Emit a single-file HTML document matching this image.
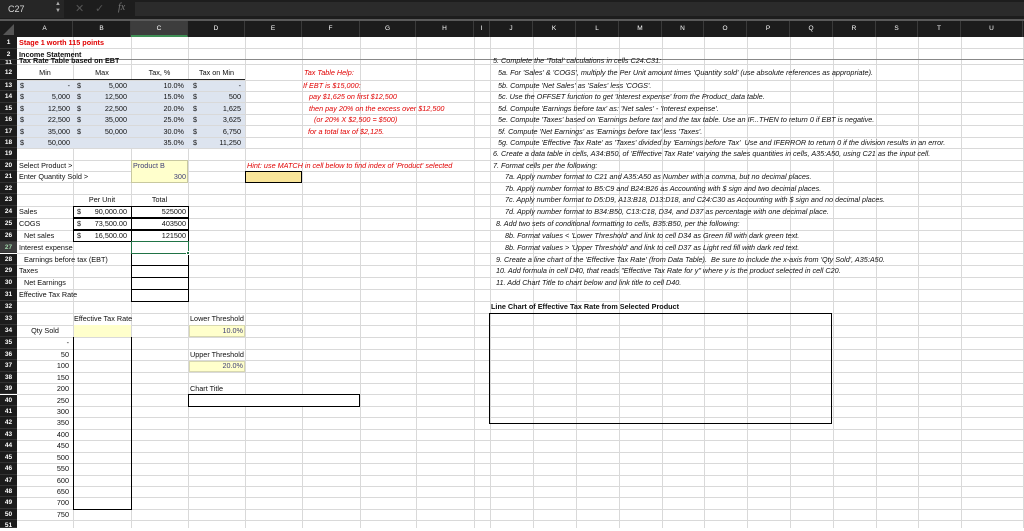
<!DOCTYPE html>
<html><head><meta charset="utf-8"><style>
*{margin:0;padding:0;box-sizing:border-box}
body{width:1024px;height:528px;overflow:hidden;background:#fff;position:relative;font-family:"Liberation Sans",sans-serif}
.a{position:absolute}
.t{position:absolute;font-size:7.25px;white-space:nowrap;color:#111;overflow:visible}
.r{text-align:right}.c{text-align:center}
.red{color:#e00000;font-style:italic}
.it{font-style:italic}
.h{position:absolute;background:#d9d9d9;height:1px;left:17px;width:1007px}
.v{position:absolute;background:#d9d9d9;width:1px;top:37px;height:491px}
.rh{position:absolute;left:0;width:17px;background:#1c1c1c;color:#fff;font-weight:bold;font-size:6.5px;text-align:center;border-bottom:1px solid #333}
.ch{position:absolute;top:21px;height:16px;line-height:16px;color:#fff;font-size:6.5px;text-align:center;border-right:1px solid #3a3a3a}
.bx{position:absolute;border:1.5px solid #000}
</style></head><body>
<div class="a" style="left:0;top:0;width:1024px;height:19px;background:#1d1d1d"></div>
<div class="a" style="left:0;top:0;width:64px;height:18px;background:#262626"></div>
<div class="t" style="left:8px;top:4px;color:#d8d8d8;font-size:9px">C27</div>
<div class="t" style="left:55px;top:1px;color:#aaa;font-size:6px;line-height:7px">▲<br>▼</div>
<div class="t" style="left:75px;top:2px;color:#555;font-size:11px">✕</div>
<div class="t" style="left:95px;top:2px;color:#555;font-size:11px">✓</div>
<div class="t" style="left:118px;top:2px;color:#777;font-size:10px;font-family:'Liberation Serif',serif;font-style:italic">fx</div>
<div class="a" style="left:135px;top:2px;width:889px;height:14px;background:#2b2b2b"></div>
<div class="a" style="left:0;top:19px;width:1024px;height:2px;background:#5a5a5a"></div>
<div class="a" style="left:0;top:21px;width:1024px;height:16px;background:#1c1c1c"></div>
<div class="a" style="left:3px;top:24px;width:0;height:0;border-left:11px solid transparent;border-bottom:11px solid #555"></div>
<div class="ch" style="left:17px;width:56px">A</div>
<div class="ch" style="left:73px;width:58px">B</div>
<div class="ch" style="left:131px;width:57px;background:#3d3d3d;border-bottom:2px solid #3f8f55">C</div>
<div class="ch" style="left:188px;width:57px">D</div>
<div class="ch" style="left:245px;width:57px">E</div>
<div class="ch" style="left:302px;width:58px">F</div>
<div class="ch" style="left:360px;width:56px">G</div>
<div class="ch" style="left:416px;width:58px">H</div>
<div class="ch" style="left:474px;width:16px">I</div>
<div class="ch" style="left:490px;width:43px">J</div>
<div class="ch" style="left:533px;width:43px">K</div>
<div class="ch" style="left:576px;width:43px">L</div>
<div class="ch" style="left:619px;width:43px">M</div>
<div class="ch" style="left:662px;width:42px">N</div>
<div class="ch" style="left:704px;width:43px">O</div>
<div class="ch" style="left:747px;width:43px">P</div>
<div class="ch" style="left:790px;width:43px">Q</div>
<div class="ch" style="left:833px;width:43px">R</div>
<div class="ch" style="left:876px;width:42px">S</div>
<div class="ch" style="left:918px;width:43px">T</div>
<div class="ch" style="left:961px;width:62px">U</div>

<div class="v" style="left:73px"></div><div class="v" style="left:131px"></div><div class="v" style="left:188px"></div>
<div class="v" style="left:245px"></div><div class="v" style="left:302px"></div><div class="v" style="left:360px"></div>
<div class="v" style="left:416px"></div><div class="v" style="left:474px"></div><div class="v" style="left:490px"></div>
<div class="v" style="left:533px"></div><div class="v" style="left:576px"></div><div class="v" style="left:619px"></div>
<div class="v" style="left:662px"></div><div class="v" style="left:704px"></div><div class="v" style="left:747px"></div>
<div class="v" style="left:790px"></div><div class="v" style="left:833px"></div><div class="v" style="left:876px"></div>
<div class="v" style="left:918px"></div><div class="v" style="left:961px"></div><div class="v" style="left:1023px"></div>

<div class="a" style="left:17px;top:80px;width:228px;height:68px;background:#dde4ef"></div>

<div class="h" style="top:48px"></div><div class="h" style="top:59px;background:#888"></div><div class="h" style="top:64px"></div>
<div class="h" style="top:80px"></div><div class="h" style="top:91px"></div><div class="h" style="top:102px"></div>
<div class="h" style="top:114px"></div><div class="h" style="top:125px"></div><div class="h" style="top:137px"></div>
<div class="h" style="top:148px"></div><div class="h" style="top:160px"></div><div class="h" style="top:171px"></div>
<div class="h" style="top:182px"></div><div class="h" style="top:194px"></div><div class="h" style="top:206px"></div>
<div class="h" style="top:218px"></div><div class="h" style="top:230px"></div><div class="h" style="top:241px"></div>
<div class="h" style="top:253px"></div><div class="h" style="top:265px"></div><div class="h" style="top:277px"></div>
<div class="h" style="top:289px"></div><div class="h" style="top:301px"></div><div class="h" style="top:313px"></div>
<div class="h" style="top:325px"></div><div class="h" style="top:337px"></div><div class="h" style="top:349px"></div>
<div class="h" style="top:360px"></div><div class="h" style="top:372px"></div><div class="h" style="top:383px"></div>
<div class="h" style="top:394px"></div><div class="h" style="top:406px"></div><div class="h" style="top:417px"></div>
<div class="h" style="top:429px"></div><div class="h" style="top:440px"></div><div class="h" style="top:452px"></div>
<div class="h" style="top:463px"></div><div class="h" style="top:475px"></div><div class="h" style="top:486px"></div>
<div class="h" style="top:497px"></div><div class="h" style="top:509px"></div><div class="h" style="top:520px"></div>
<div class="a" style="left:17px;top:79px;width:228px;height:1px;background:#222"></div>

<div class="rh" style="top:37px;height:11.5px;line-height:11px">1</div>
<div class="rh" style="top:48.5px;height:11px;line-height:11px">2</div>
<div class="rh" style="top:59.5px;height:5px;line-height:5px;overflow:hidden">11</div>
<div class="rh" style="top:64.5px;height:15.5px;line-height:15px">12</div>
<div class="rh" style="top:80px;height:11.4px;line-height:11px">13</div>
<div class="rh" style="top:91.4px;height:11.4px;line-height:11px">14</div>
<div class="rh" style="top:102.8px;height:11.4px;line-height:11px">15</div>
<div class="rh" style="top:114.2px;height:11.4px;line-height:11px">16</div>
<div class="rh" style="top:125.6px;height:11.4px;line-height:11px">17</div>
<div class="rh" style="top:137px;height:11.4px;line-height:11px">18</div>
<div class="rh" style="top:148.4px;height:11.4px;line-height:11px">19</div>
<div class="rh" style="top:159.8px;height:11.4px;line-height:11px">20</div>
<div class="rh" style="top:171.2px;height:11.4px;line-height:11px">21</div>
<div class="rh" style="top:182.6px;height:11.4px;line-height:11px">22</div>
<div class="rh" style="top:194px;height:11.9px;line-height:12px">23</div>
<div class="rh" style="top:205.9px;height:11.9px;line-height:12px">24</div>
<div class="rh" style="top:217.8px;height:11.9px;line-height:12px">25</div>
<div class="rh" style="top:229.7px;height:11.9px;line-height:12px">26</div>
<div class="rh" style="top:241.6px;height:11.9px;line-height:12px;background:#3d3d3d;color:#9fd6a9">27</div>
<div class="rh" style="top:253.5px;height:11.9px;line-height:12px">28</div>
<div class="rh" style="top:265.4px;height:11.9px;line-height:12px">29</div>
<div class="rh" style="top:277.3px;height:11.9px;line-height:12px">30</div>
<div class="rh" style="top:289.2px;height:11.9px;line-height:12px">31</div>
<div class="rh" style="top:301.1px;height:11.9px;line-height:12px">32</div>
<div class="rh" style="top:313px;height:11.9px;line-height:12px">33</div>
<div class="rh" style="top:324.9px;height:11.9px;line-height:12px">34</div>
<div class="rh" style="top:336.8px;height:11.9px;line-height:12px">35</div>
<div class="rh" style="top:348.7px;height:11.44px;line-height:11px">36</div>
<div class="rh" style="top:360.1px;height:11.44px;line-height:11px">37</div>
<div class="rh" style="top:371.6px;height:11.44px;line-height:11px">38</div>
<div class="rh" style="top:383px;height:11.44px;line-height:11px">39</div>
<div class="rh" style="top:394.5px;height:11.44px;line-height:11px">40</div>
<div class="rh" style="top:405.9px;height:11.44px;line-height:11px">41</div>
<div class="rh" style="top:417.3px;height:11.44px;line-height:11px">42</div>
<div class="rh" style="top:428.8px;height:11.44px;line-height:11px">43</div>
<div class="rh" style="top:440.2px;height:11.44px;line-height:11px">44</div>
<div class="rh" style="top:451.7px;height:11.44px;line-height:11px">45</div>
<div class="rh" style="top:463.1px;height:11.44px;line-height:11px">46</div>
<div class="rh" style="top:474.5px;height:11.44px;line-height:11px">47</div>
<div class="rh" style="top:486px;height:11.44px;line-height:11px">48</div>
<div class="rh" style="top:497.4px;height:11.44px;line-height:11px">49</div>
<div class="rh" style="top:508.9px;height:11.44px;line-height:11px">50</div>
<div class="rh" style="top:520.3px;height:8px;line-height:11px">51</div>

<div class="t" style="left:19px;top:37px;line-height:11px;color:#e00000;font-weight:bold">Stage 1 worth 115 points</div>
<div class="t" style="left:19px;top:48.5px;line-height:11px;font-weight:bold">Income Statement</div>
<div class="t" style="left:19px;top:57px;line-height:7px;height:7px;overflow:hidden;font-weight:bold;text-decoration:underline">Tax Rate Table based on EBT</div>
<div class="t c" style="left:17px;top:66px;width:56px;line-height:14px">Min</div>
<div class="t c" style="left:73px;top:66px;width:58px;line-height:14px">Max</div>
<div class="t c" style="left:131px;top:66px;width:57px;line-height:14px">Tax, %</div>
<div class="t c" style="left:188px;top:66px;width:57px;line-height:14px">Tax on Min</div>
<div class="t red" style="left:304px;top:66px;line-height:14px">Tax Table Help:</div>
<div class="t" style="left:20px;top:80px;line-height:11px">$</div><div class="t r" style="left:20px;top:80px;width:50px;line-height:11px">-</div>
<div class="t" style="left:77px;top:80px;line-height:11px">$</div><div class="t r" style="left:77px;top:80px;width:50px;line-height:11px">5,000</div>
<div class="t r" style="left:131px;top:80px;width:53px;line-height:11px">10.0%</div>
<div class="t" style="left:193px;top:80px;line-height:11px">$</div><div class="t r" style="left:193px;top:80px;width:48px;line-height:11px">-</div>
<div class="t red" style="left:303px;top:80px;line-height:11px">If EBT is $15,000:</div>

<div class="t" style="left:20px;top:91.4px;line-height:11px">$</div><div class="t r" style="left:20px;top:91.4px;width:50px;line-height:11px">5,000</div>
<div class="t" style="left:77px;top:91.4px;line-height:11px">$</div><div class="t r" style="left:77px;top:91.4px;width:50px;line-height:11px">12,500</div>
<div class="t r" style="left:131px;top:91.4px;width:53px;line-height:11px">15.0%</div>
<div class="t" style="left:193px;top:91.4px;line-height:11px">$</div><div class="t r" style="left:193px;top:91.4px;width:48px;line-height:11px">500</div>
<div class="t red" style="left:309px;top:91.4px;line-height:11px">pay $1,625 on first $12,500</div>

<div class="t" style="left:20px;top:102.8px;line-height:11px">$</div><div class="t r" style="left:20px;top:102.8px;width:50px;line-height:11px">12,500</div>
<div class="t" style="left:77px;top:102.8px;line-height:11px">$</div><div class="t r" style="left:77px;top:102.8px;width:50px;line-height:11px">22,500</div>
<div class="t r" style="left:131px;top:102.8px;width:53px;line-height:11px">20.0%</div>
<div class="t" style="left:193px;top:102.8px;line-height:11px">$</div><div class="t r" style="left:193px;top:102.8px;width:48px;line-height:11px">1,625</div>
<div class="t red" style="left:309px;top:102.8px;line-height:11px">then pay 20% on the excess over $12,500</div>

<div class="t" style="left:20px;top:114.2px;line-height:11px">$</div><div class="t r" style="left:20px;top:114.2px;width:50px;line-height:11px">22,500</div>
<div class="t" style="left:77px;top:114.2px;line-height:11px">$</div><div class="t r" style="left:77px;top:114.2px;width:50px;line-height:11px">35,000</div>
<div class="t r" style="left:131px;top:114.2px;width:53px;line-height:11px">25.0%</div>
<div class="t" style="left:193px;top:114.2px;line-height:11px">$</div><div class="t r" style="left:193px;top:114.2px;width:48px;line-height:11px">3,625</div>
<div class="t red" style="left:314px;top:114.2px;line-height:11px">(or 20% X $2,500 = $500)</div>

<div class="t" style="left:20px;top:125.6px;line-height:11px">$</div><div class="t r" style="left:20px;top:125.6px;width:50px;line-height:11px">35,000</div>
<div class="t" style="left:77px;top:125.6px;line-height:11px">$</div><div class="t r" style="left:77px;top:125.6px;width:50px;line-height:11px">50,000</div>
<div class="t r" style="left:131px;top:125.6px;width:53px;line-height:11px">30.0%</div>
<div class="t" style="left:193px;top:125.6px;line-height:11px">$</div><div class="t r" style="left:193px;top:125.6px;width:48px;line-height:11px">6,750</div>
<div class="t red" style="left:308px;top:125.6px;line-height:11px">for a total tax of $2,125.</div>

<div class="t" style="left:20px;top:137px;line-height:11px">$</div><div class="t r" style="left:20px;top:137px;width:50px;line-height:11px">50,000</div>
<div class="t r" style="left:131px;top:137px;width:53px;line-height:11px">35.0%</div>
<div class="t" style="left:193px;top:137px;line-height:11px">$</div><div class="t r" style="left:193px;top:137px;width:48px;line-height:11px">11,250</div>

<div class="a" style="left:131px;top:160px;width:57px;height:23px;background:#ffffcc;border:1px solid #c8c8a0"></div>
<div class="t" style="left:19px;top:159.8px;line-height:11px">Select Product &gt;</div>
<div class="t" style="left:133px;top:159.8px;line-height:11px;color:#3f3f76">Product B</div>
<div class="t red" style="left:247px;top:159.8px;line-height:11px">Hint: use MATCH in cell below to find index of 'Product' selected</div>
<div class="t" style="left:19px;top:171.2px;line-height:11px">Enter Quantity Sold &gt;</div>
<div class="t r" style="left:131px;top:171.2px;width:55px;line-height:11px;color:#3f3f76">300</div>
<div class="a" style="left:245px;top:170.5px;width:57px;height:12.5px;background:#f9e59a;border:1.5px solid #000"></div>

<div class="t c" style="left:73px;top:194px;width:58px;line-height:12px">Per Unit</div>
<div class="t c" style="left:131px;top:194px;width:57px;line-height:12px">Total</div>
<div class="bx" style="left:73px;top:205.5px;width:58.5px;height:12.5px"></div>
<div class="bx" style="left:73px;top:217.5px;width:58.5px;height:12.5px"></div>
<div class="bx" style="left:73px;top:229.5px;width:58.5px;height:12.5px"></div>
<div class="bx" style="left:130.5px;top:205.5px;width:58px;height:12.5px"></div>
<div class="bx" style="left:130.5px;top:217.5px;width:58px;height:12.5px"></div>
<div class="bx" style="left:130.5px;top:229.5px;width:58px;height:12.5px"></div>
<div class="bx" style="left:130.5px;top:253px;width:58px;height:12.5px"></div>
<div class="bx" style="left:130.5px;top:265px;width:58px;height:12.5px"></div>
<div class="bx" style="left:130.5px;top:277px;width:58px;height:12.5px"></div>
<div class="bx" style="left:130.5px;top:289px;width:58px;height:12.5px"></div>
<div class="a" style="left:130.5px;top:241px;width:58px;height:12.5px;border:1.5px solid #217346"></div>
<div class="a" style="left:186px;top:251px;width:4px;height:4px;background:#217346;border:1px solid #fff"></div>

<div class="t" style="left:19px;top:205.9px;line-height:12px">Sales</div>
<div class="t" style="left:77px;top:205.9px;line-height:12px">$</div><div class="t r" style="left:77px;top:205.9px;width:50px;line-height:12px">90,000.00</div>
<div class="t r" style="left:131px;top:205.9px;width:55px;line-height:12px">525000</div>
<div class="t" style="left:19px;top:217.8px;line-height:12px">COGS</div>
<div class="t" style="left:77px;top:217.8px;line-height:12px">$</div><div class="t r" style="left:77px;top:217.8px;width:50px;line-height:12px">73,500.00</div>
<div class="t r" style="left:131px;top:217.8px;width:55px;line-height:12px">403500</div>
<div class="t" style="left:24px;top:229.7px;line-height:12px">Net sales</div>
<div class="t" style="left:77px;top:229.7px;line-height:12px">$</div><div class="t r" style="left:77px;top:229.7px;width:50px;line-height:12px">16,500.00</div>
<div class="t r" style="left:131px;top:229.7px;width:55px;line-height:12px">121500</div>
<div class="t" style="left:19px;top:241.6px;line-height:12px">Interest expense</div>
<div class="t" style="left:24px;top:253.5px;line-height:12px">Earnings before tax (EBT)</div>
<div class="t" style="left:19px;top:265.4px;line-height:12px">Taxes</div>
<div class="t" style="left:24px;top:277.3px;line-height:12px">Net Earnings</div>
<div class="t" style="left:19px;top:289.2px;line-height:12px">Effective Tax Rate</div>

<div class="t" style="left:74px;top:313px;line-height:12px">Effective Tax Rate</div>
<div class="t" style="left:190px;top:313px;line-height:12px">Lower Threshold</div>
<div class="t c" style="left:17px;top:324.9px;width:56px;line-height:12px">Qty Sold</div>
<div class="a" style="left:74px;top:325px;width:57px;height:11.5px;background:#ffffcc"></div>
<div class="a" style="left:188.5px;top:325px;width:56px;height:11.5px;background:#ffffcc;border:1px solid #d8d8b0"></div>
<div class="t r" style="left:188px;top:324.9px;width:55px;line-height:12px;color:#3f3f76">10.0%</div>
<div class="a" style="left:73px;top:336.5px;width:58.5px;height:173px;border:1.5px solid #000;border-top:none"></div>
<div class="t r" style="left:17px;top:336.8px;width:52px;line-height:12px">-</div>
<div class="t r" style="left:17px;top:348.7px;width:52px;line-height:11px">50</div>
<div class="t r" style="left:17px;top:360.1px;width:52px;line-height:11px">100</div>
<div class="t r" style="left:17px;top:371.6px;width:52px;line-height:11px">150</div>
<div class="t r" style="left:17px;top:383px;width:52px;line-height:11px">200</div>
<div class="t r" style="left:17px;top:394.5px;width:52px;line-height:11px">250</div>
<div class="t r" style="left:17px;top:405.9px;width:52px;line-height:11px">300</div>
<div class="t r" style="left:17px;top:417.3px;width:52px;line-height:11px">350</div>
<div class="t r" style="left:17px;top:428.8px;width:52px;line-height:11px">400</div>
<div class="t r" style="left:17px;top:440.2px;width:52px;line-height:11px">450</div>
<div class="t r" style="left:17px;top:451.7px;width:52px;line-height:11px">500</div>
<div class="t r" style="left:17px;top:463.1px;width:52px;line-height:11px">550</div>
<div class="t r" style="left:17px;top:474.5px;width:52px;line-height:11px">600</div>
<div class="t r" style="left:17px;top:486px;width:52px;line-height:11px">650</div>
<div class="t r" style="left:17px;top:497.4px;width:52px;line-height:11px">700</div>
<div class="t r" style="left:17px;top:508.9px;width:52px;line-height:11px">750</div>

<div class="t" style="left:190px;top:348.7px;line-height:11px">Upper Threshold</div>
<div class="a" style="left:188.5px;top:360.5px;width:56px;height:11px;background:#ffffcc;border:1px solid #d8d8b0"></div>
<div class="t r" style="left:188px;top:360.1px;width:55px;line-height:11px;color:#3f3f76">20.0%</div>
<div class="t" style="left:190px;top:383px;line-height:11px">Chart Title</div>
<div class="a" style="left:187.5px;top:393.5px;width:172px;height:13px;border:1.5px solid #000;background:#fff"></div>

<div class="t it" style="left:493px;top:57px;line-height:7px;height:7px;overflow:hidden">5. Complete the 'Total' calculations in cells C24:C31:</div>
<div class="t it" style="left:498px;top:66px;line-height:14px">5a. For 'Sales' &amp; 'COGS', multiply the Per Unit amount times 'Quantity sold' (use absolute references as appropriate).</div>
<div class="t it" style="left:498px;top:80px;line-height:11px">5b. Compute 'Net Sales' as 'Sales' less 'COGS'.</div>
<div class="t it" style="left:498px;top:91.4px;line-height:11px">5c. Use the OFFSET function to get 'Interest expense' from the Product_data table.</div>
<div class="t it" style="left:498px;top:102.8px;line-height:11px">5d. Compute 'Earnings before tax' as: 'Net sales' - 'Interest expense'.</div>
<div class="t it" style="left:498px;top:114.2px;line-height:11px">5e. Compute 'Taxes' based on 'Earnings before tax' and the tax table. Use an IF...THEN to return 0 if EBT is negative.</div>
<div class="t it" style="left:498px;top:125.6px;line-height:11px">5f. Compute 'Net Earnings' as 'Earnings before tax' less 'Taxes'.</div>
<div class="t it" style="left:498px;top:137px;line-height:11px">5g. Compute 'Effective Tax Rate' as 'Taxes' divided by 'Earnings before Tax'&nbsp; Use and IFERROR to return 0 if the division results in an error.</div>
<div class="t it" style="left:493px;top:148.4px;line-height:11px">6. Create a data table in cells, A34:B50, of 'Efffective Tax Rate' varying the sales quantities in cells, A35:A50, using C21 as the input cell.</div>
<div class="t it" style="left:493px;top:159.8px;line-height:11px">7. Format cells per the following:</div>
<div class="t it" style="left:505px;top:171.2px;line-height:11px">7a. Apply number format to C21 and A35:A50 as Number with a comma, but no decimal places.</div>
<div class="t it" style="left:505px;top:182.6px;line-height:11px">7b. Apply number format to B5:C9 and B24:B26 as Accounting with $ sign and two decimal places.</div>
<div class="t it" style="left:505px;top:194px;line-height:12px">7c. Apply number format to D5:D9, A13:B18, D13:D18, and C24:C30 as Accounting with $ sign and no decimal places.</div>
<div class="t it" style="left:505px;top:205.9px;line-height:12px">7d. Apply number format to B34:B50, C13:C18, D34, and D37 as percentage with one decimal place.</div>
<div class="t it" style="left:496px;top:217.8px;line-height:12px">8. Add two sets of conditional formatting to cells, B35:B50, per the following:</div>
<div class="t it" style="left:505px;top:229.7px;line-height:12px">8b. Format values &lt; 'Lower Threshold' and link to cell D34 as Green fill with dark green text.</div>
<div class="t it" style="left:505px;top:241.6px;line-height:12px">8b. Format values &gt; 'Upper Threshold' and link to cell D37 as Light red fill with dark red text.</div>
<div class="t it" style="left:496px;top:253.5px;line-height:12px">9. Create a line chart of the 'Effective Tax Rate' (from Data Table).&nbsp; Be sure to include the x-axis from 'Qty Sold', A35:A50.</div>
<div class="t it" style="left:496px;top:265.4px;line-height:12px">10. Add formula in cell D40, that reads "Effective Tax Rate for y" where y is the product selected in cell C20.</div>
<div class="t it" style="left:496px;top:277.3px;line-height:12px">11. Add Chart Title to chart below and link title to cell D40.</div>
<div class="t" style="left:491px;top:301.1px;line-height:12px;font-weight:bold">Line Chart of Effective Tax Rate from Selected Product</div>
<div class="a" style="left:489px;top:312.5px;width:343px;height:111px;border:1.5px solid #000"></div>
</body></html>
